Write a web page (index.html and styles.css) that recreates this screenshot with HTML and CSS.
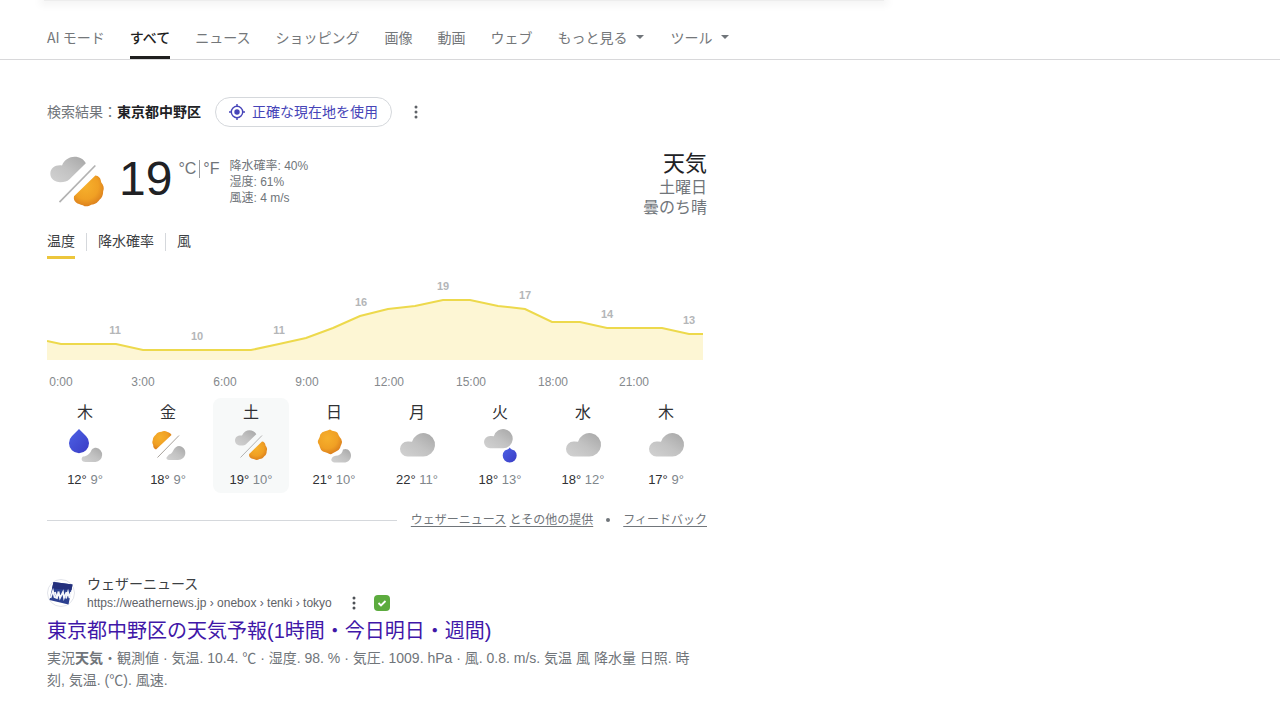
FILE: index.html
```html
<!DOCTYPE html>
<html lang="ja">
<head>
  <meta charset="UTF-8" />
  <title>天気 - 検索</title>
  <meta name="viewport" content="width=device-width, initial-scale=1.0" />
  <link rel="stylesheet" href="styles.css">
</head>
<body>
  <!-- Shared icon shapes -->
  <svg class="defs" aria-hidden="true">
    <defs>
      <linearGradient id="gray" x1="0" y1="1" x2="1" y2="0">
        <stop offset="0" stop-color="#d2d2d2" />
        <stop offset="0.5" stop-color="#c2c2c2" />
        <stop offset="1" stop-color="#a6a6a6" />
      </linearGradient>
      <radialGradient id="orange" cx="0.4" cy="0.35" r="0.7">
        <stop offset="0" stop-color="#f6b02c" />
        <stop offset="0.6" stop-color="#f0a024" />
        <stop offset="1" stop-color="#d87a1c" />
      </radialGradient>
      <linearGradient id="blue" x1="0" y1="0" x2="1" y2="1">
        <stop offset="0" stop-color="#4d62e6" />
        <stop offset="1" stop-color="#3a3cc4" />
      </linearGradient>
      <path id="cloud" fill="url(#gray)" d="M7.5 23.500H23A11.700 11.700 0 1 0 12 8.800Q9.500 8.300 7.500 8.500A7.500 7.500 0 0 0 7.500 23.500Z" />
      <g id="cloudy"><use href="#cloud" x="3" y="7" /></g>
      <g id="rain-cloud">
        <path fill="url(#blue)" d="M14 3L21 10A10 10 0 1 1 7 10Z" />
        <path fill="url(#gray)" d="M18 30.500C21.500 30.500 25 28 26.500 24C28 22 29.500 21.700 31 21.700A7.200 7.200 0 0 1 30.500 36H20.500C16.500 36 15.500 32.500 18 30.500Z" />
      </g>
      <g id="sun-or-cloud">
        <path fill="url(#orange)" d="M8 23.500L23.500 9C23 7.500 21.500 6.500 19.500 6C17.500 4.700 15.500 4.500 13.500 5.700C11 6 9 6.500 8 8.500C6 10 5 11.500 4.800 14C4 16 4.300 17.500 5.200 19C5 21 6 22.800 8 23.500Z" />
        <path stroke="#a8a29c" d="M9.500 31.500L31 9.500" />
        <path fill="url(#gray)" d="M18.500 31.500L21 28.500C23 28 24 27 25 25C26.500 21.500 29 20 31 20C35 20.500 37.300 23 37.300 27C37.300 31 34 34 30 34H21C19.500 34 18 33 18.500 31.500Z" />
      </g>
      <g id="cloud-or-sun">
        <path fill="url(#gray)" d="M4 14.500C4 11 7 9 11 9.500C12.500 6 15.500 4.300 18.500 4.300C21.500 4.300 24 5.700 25.300 8.200L15.500 17.800C14 19.300 12.500 19.500 10 19.500C6.500 19.500 4 17.500 4 14.500Z" />
        <path stroke="#b2b2b2" d="M9.500 31.500L31 9.500" />
        <path fill="url(#orange)" d="M18.200 28L31 15.500C33 15.700 34.300 17 34.500 19.500C36 21.500 36.500 23 35.700 25C35.700 27.500 35 29 33.500 30C32 32 31 32.700 28.500 33C26.500 34.300 25 34.300 23.500 33.300C20.500 32.700 17.500 31.500 18.200 28Z" />
      </g>
      <g id="sun-cloud">
        <path fill="url(#orange)" d="M16 3.500Q18 5 20.500 5.200Q24 6 24.500 9Q25.500 11 27.200 13Q28.500 15.500 27.500 18Q26.500 20 26 22Q24.500 25 22 25.500Q19.500 26.500 17.500 28Q15.500 28.500 13.500 27Q11.500 26 9 25.500Q6.500 24 6 21.500Q5.500 19 4 17Q3.500 14.500 5 12.500Q6 10.500 6.300 8.500Q8 5.500 11 5.200Q13.500 4.800 16 3.500Z" />
        <path fill="url(#gray)" d="M18 32C18.500 30.500 21 29.500 24 29.500C27 28.500 28.500 26.500 29 23.500C33.500 21.500 37.300 25.500 37 30C36.500 34 34 36.500 30 36.500H21.500C18.500 36.500 16 34.500 18 32Z" />
      </g>
      <g id="cloud-rain">
        <use href="#cloud" transform="translate(4 3) scale(0.82)" />
        <path fill="url(#blue)" stroke="#fff" stroke-width="1.500" paint-order="stroke" d="M29.700 21.500C31 23.500 32.500 23.500 34.500 24.500A7 7 0 1 1 24.900 24.500C26.500 23.500 28.500 23.500 29.700 21.500Z" />
      </g>
    </defs>
  </svg>

  <header>
    <div class="search-bar"></div>
    <nav>
      <a href="#">AI モード</a>
      <a href="#" class="active">すべて</a>
      <a href="#">ニュース</a>
      <a href="#">ショッピング</a>
      <a href="#">画像</a>
      <a href="#">動画</a>
      <a href="#">ウェブ</a>
      <button type="button" class="more">もっと見る</button>
      <button type="button" class="more">ツール</button>
    </nav>
  </header>

  <main>
    <div class="location">
      <span>検索結果：<b>東京都中野区</b></span>
      <button type="button" class="precise">
        <svg width="16" height="16" viewBox="0 0 16 16" fill="none" stroke="#4644b8" stroke-width="1.400">
          <circle cx="8" cy="8" r="5.700" />
          <circle cx="8" cy="8" r="2.700" fill="#4644b8" stroke="none" />
          <path d="M8 0V2.500M8 13.500V16M0 8H2.500M13.500 8H16" />
        </svg>
        正確な現在地を使用
      </button>
      <button type="button" class="dots" aria-label="メニュー">
        <svg width="4" height="14" viewBox="0 0 4 14" fill="#5f6368"><circle cx="2" cy="2" r="1.500" /><circle cx="2" cy="7" r="1.500" /><circle cx="2" cy="12" r="1.500" /></svg>
      </button>
    </div>

    <section class="weather">
      <div class="current">
        <svg width="60" height="60" viewBox="2 2 36 36" fill="none"><use href="#cloud-or-sun" /></svg>
        <div class="temp">19</div>
        <div class="units"><span>°C</span><a href="#">°F</a></div>
        <div class="stats">
          <div>降水確率: 40%</div>
          <div>湿度: 61%</div>
          <div>風速: 4 m/s</div>
        </div>
        <div class="summary">
          <h2>天気</h2>
          <div>土曜日</div>
          <div>曇のち晴</div>
        </div>
      </div>

      <div class="tabs">
        <button type="button" class="selected">温度</button>
        <button type="button">降水確率</button>
        <button type="button">風</button>
      </div>

      <svg class="chart" viewBox="0 0 656 120">
        <path class="area" d="M0 71L14 74H69L96 80H204L232 74L259 68L286 58L313 46L341 39L368 36L396 30H423L451 36L478 39L505 52H533L560 58H615L642 64H656V90H0Z" />
        <path class="line" d="M0 71L14 74H69L96 80H204L232 74L259 68L286 58L313 46L341 39L368 36L396 30H423L451 36L478 39L505 52H533L560 58H615L642 64H656" />
        <g class="values">
          <text x="68" y="64">11</text>
          <text x="150" y="70">10</text>
          <text x="232" y="64">11</text>
          <text x="314" y="36">16</text>
          <text x="396" y="20">19</text>
          <text x="478" y="29">17</text>
          <text x="560" y="48">14</text>
          <text x="642" y="54">13</text>
        </g>
        <g class="hours">
          <text x="14" y="116">0:00</text>
          <text x="96" y="116">3:00</text>
          <text x="178" y="116">6:00</text>
          <text x="260" y="116">9:00</text>
          <text x="342" y="116">12:00</text>
          <text x="424" y="116">15:00</text>
          <text x="506" y="116">18:00</text>
          <text x="587" y="116">21:00</text>
        </g>
      </svg>

      <div class="days">
        <div class="day"><span>木</span><svg viewBox="0 0 40 40" fill="none"><use href="#rain-cloud" /></svg><p>12° <i>9°</i></p></div>
        <div class="day"><span>金</span><svg viewBox="0 0 40 40" fill="none"><use href="#sun-or-cloud" /></svg><p>18° <i>9°</i></p></div>
        <div class="day today"><span>土</span><svg viewBox="0 0 40 40" fill="none"><use href="#cloud-or-sun" /></svg><p>19° <i>10°</i></p></div>
        <div class="day"><span>日</span><svg viewBox="0 0 40 40" fill="none"><use href="#sun-cloud" /></svg><p>21° <i>10°</i></p></div>
        <div class="day"><span>月</span><svg viewBox="0 0 40 40" fill="none"><use href="#cloudy" /></svg><p>22° <i>11°</i></p></div>
        <div class="day"><span>火</span><svg viewBox="0 0 40 40" fill="none"><use href="#cloud-rain" /></svg><p>18° <i>13°</i></p></div>
        <div class="day"><span>水</span><svg viewBox="0 0 40 40" fill="none"><use href="#cloudy" /></svg><p>18° <i>12°</i></p></div>
        <div class="day"><span>木</span><svg viewBox="0 0 40 40" fill="none"><use href="#cloudy" /></svg><p>17° <i>9°</i></p></div>
      </div>

      <div class="credits">
        <hr />
        <div><a href="#">ウェザーニュース</a> <a href="#">とその他の提供</a></div>
        <span class="bullet"></span>
        <a href="#">フィードバック</a>
      </div>
    </section>

    <!-- Search result -->
    <article class="result">
      <div class="site">
        <svg width="28" height="28" viewBox="0 0 28 28">
          <circle cx="14" cy="14" r="13.500" fill="#fff" stroke="#e2e4ea" />
          <path fill="#2b3f8f" d="M6.500 3L25.500 5.500L21.500 25.500L2.500 21Z" />
          <path fill="#24307c" d="M6.500 3L25.500 5.500L24.500 11L5 9.500Z" />
          <path fill="none" stroke="#f4f5fa" stroke-width="1.700" d="M3.500 19L6 12L7.500 18L10 19L11.500 12.500M8 13L10 19M11.500 12.500L13 19L16 13L17 19L19.500 13M19 19.500L21 13L22.500 19L24 13" />
        </svg>
        <div>
          <div class="site-name">ウェザーニュース</div>
          <div class="url">
            <cite>https://weathernews.jp › onebox › tenki › tokyo</cite>
            <button type="button" class="dots" aria-label="この結果について">
              <svg width="4" height="14" viewBox="0 0 4 14" fill="#4d5156"><circle cx="2" cy="2" r="1.500" /><circle cx="2" cy="7" r="1.500" /><circle cx="2" cy="12" r="1.500" /></svg>
            </button>
            <svg width="16" height="16" viewBox="0 0 16 16"><rect width="16" height="16" rx="4" fill="#5cab3e" /><path d="M4.500 8L7 10.500L11.500 6" fill="none" stroke="#fff" stroke-width="1.800" /></svg>
          </div>
        </div>
      </div>
      <h3><a href="#">東京都中野区の天気予報(1時間・今日明日・週間)</a></h3>
      <p>実況<b>天気</b>・観測値 · 気温. 10.4. ℃ · 湿度. 98. % · 気圧. 1009. hPa · 風. 0.8. m/s. 気温 風 降水量 日照. 時刻, 気温. (℃). 風速.</p>
    </article>
  </main>
</body>
</html>
```
FILE: styles.css
```css
body {
  margin: 0;
  font-family: 'Liberation Sans', 'Noto Sans CJK JP', sans-serif;
  font-size: 14px;
  line-height: 20px;
  background: #fff;
  color: #70757a;
}

button {
  padding: 0;
  border: none;
  background: none;
  color: inherit;
  font: inherit;
  cursor: pointer;
}

svg {
  display: block;
  flex-shrink: 0;
}

.defs {
  position: absolute;
  width: 0;
  height: 0;
}

/* header */
header {
  border-bottom: 1px solid #d8d8da;
}

.search-bar {
  height: 1px;
  max-width: 840px;
  margin-left: 44px;
  background: #ededed;
  box-shadow: 0 0 8px 4px rgba(0, 0, 0, 0.05);
}

nav {
  display: flex;
  gap: 25px;
  padding: 17px 47px 0;
  font-family: 'Noto Sans CJK JP', sans-serif;
}

nav a,
nav button {
  height: 38px;
  border-bottom: 3px solid transparent;
  color: #74777a;
  line-height: 38px;
  text-decoration: none;
  white-space: nowrap;
}

nav .active {
  border-color: #1f1f1f;
  color: #1f1f1f;
  font-weight: 500;
}

nav .more {
  display: flex;
  box-sizing: content-box;
  align-items: center;
  margin-right: 2px;
}

.more::after {
  content: "";
  margin-left: 8px;
  border: 4px solid transparent;
  border-top-color: #70757a;
  border-bottom: none;
}

main {
  max-width: 660px;
  padding: 0 47px;
}

/* location */
.location {
  display: flex;
  align-items: center;
  margin-top: 37px;
}

.location b {
  color: #202124;
}

.precise {
  display: flex;
  align-items: center;
  gap: 7px;
  height: 30px;
  margin: 0 22px 0 14px;
  padding: 0 13px;
  border: 1px solid #d5d8dc;
  border-radius: 15px;
  color: #4644b8;
}

/* weather */
.current {
  display: flex;
  align-items: flex-start;
  margin-top: 23px;
}

.current > svg {
  margin-top: 3px;
}

.temp {
  margin: 1px 6px 0 12px;
  color: #202124;
  font-size: 48px;
  line-height: 56px;
}

.units {
  display: flex;
  margin-top: 10px;
  font-size: 16px;
  line-height: 18px;
}

.units a {
  margin-left: 3px;
  padding-left: 3px;
  border-left: 1px solid #9a9da0;
  color: inherit;
  text-decoration: none;
}

.stats {
  margin: 8px 0 0 10px;
  font-size: 12px;
  line-height: 16px;
}

.summary {
  margin-left: auto;
  font-size: 16px;
  text-align: right;
}

.summary h2 {
  margin: 0;
  color: #202124;
  font-size: 22px;
  font-weight: 400;
  line-height: 28px;
}

.tabs {
  display: flex;
  margin-top: 13px;
  color: #3c4043;
}

.tabs button {
  height: 28px;
  padding-bottom: 5px;
  border-bottom: 3px solid transparent;
}

.tabs button + button::before {
  content: "";
  display: inline-block;
  width: 1px;
  height: 18px;
  margin: 0 11px;
  background: #d5d8dc;
  vertical-align: middle;
}

.tabs .selected {
  border-color: #ecc63c;
}

.chart {
  width: 100%;
  max-width: 656px;
  margin-top: 11px;
}

.area {
  fill: #fdf6d4;
}

.line {
  fill: none;
  stroke: #edd94c;
  stroke-width: 2;
}

.values {
  fill: #b4b6b8;
  font-size: 11px;
  font-weight: 700;
  text-anchor: middle;
}

.hours {
  fill: #85898d;
  font-size: 12px;
  text-anchor: middle;
}

.days {
  display: flex;
  gap: 7px;
  max-width: 657px;
  margin-top: 8px;
}

.day {
  display: flex;
  flex: 1;
  flex-direction: column;
  align-items: center;
  height: 95px;
  border-radius: 8px;
  color: #303134;
}

.day span {
  height: 28px;
  font-size: 16px;
  line-height: 30px;
}

.day svg {
  width: 40px;
  height: 40px;
}

.day p {
  margin: 4px 0 0;
  font-size: 13px;
  line-height: 20px;
}

.day i {
  color: #80868b;
  font-style: normal;
}

.today {
  background: #f7f9f9;
}

.credits {
  display: flex;
  align-items: center;
  margin-top: 17px;
  font-size: 12px;
}

.credits hr {
  flex: 1;
  margin: 0 14px 0 0;
  border: none;
  border-top: 1px solid #d5d8dc;
}

.credits a {
  color: inherit;
  text-underline-offset: 2px;
}

.bullet {
  width: 4px;
  height: 4px;
  margin: 0 13px;
  border-radius: 50%;
  background: #70757a;
}

/* result */
.result {
  margin-top: 44px;
}

.site {
  display: flex;
  align-items: center;
  gap: 12px;
}

.site-name {
  color: #3c4043;
}

.url {
  display: flex;
  align-items: center;
  height: 18px;
  color: #5f6368;
  font-size: 12px;
}

.url cite {
  font-style: normal;
}

.url .dots {
  margin: 0 18px 0 20px;
}

.result h3 {
  margin: 5px 0 2px;
  font-size: 20px;
  font-weight: 400;
  line-height: 28px;
}

.result h3 a {
  color: #4017a8;
  text-decoration: none;
}

.result p {
  margin: 0;
  line-height: 22px;
}
```
